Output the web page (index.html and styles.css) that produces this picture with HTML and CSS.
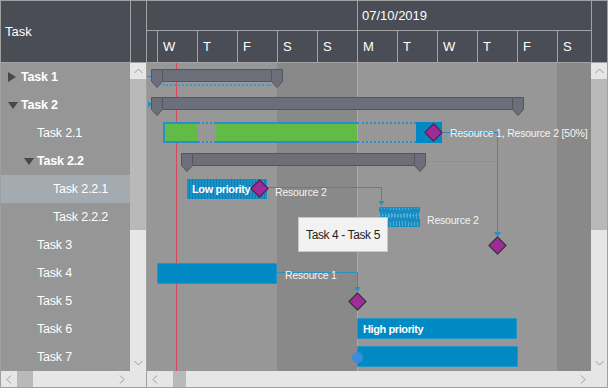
FILE: index.html
```html
<!DOCTYPE html>
<html lang="en">
<head>
  <meta charset="UTF-8">
  <title>Gantt | Week of 07/10/2019</title>
  <link rel="stylesheet" href="styles.css">
</head>
<body>
<div class="gantt">
  <!-- header -->
  <div class="head-task">Task</div>
  <div class="head-gap left"></div>
  <div class="timescale">
    <div class="scale-top">
      <div class="week first"></div>
      <div class="week">07/10/2019</div>
    </div>
    <div class="scale-days">
      <div class="day stub"></div>
      <div class="day">W</div>
      <div class="day">T</div>
      <div class="day">F</div>
      <div class="day">S</div>
      <div class="day">S</div>
      <div class="day">M</div>
      <div class="day">T</div>
      <div class="day">W</div>
      <div class="day">T</div>
      <div class="day">F</div>
      <div class="day last">S</div>
    </div>
  </div>
  <div class="head-gap right"></div>

  <!-- task list -->
  <div class="tasks">
    <div class="task-row top"><span class="caret"><svg width="8" height="10"><path d="M0 0L8 5L0 10Z"/></svg></span>Task 1</div>
    <div class="task-row top"><span class="caret"><svg width="10" height="7"><path d="M0 0H10L5 7Z"/></svg></span>Task 2</div>
    <div class="task-row">Task 2.1</div>
    <div class="task-row bold"><span class="caret"><svg width="10" height="7"><path d="M0 0H10L5 7Z"/></svg></span>Task 2.2</div>
    <div class="task-row deep selected">Task 2.2.1</div>
    <div class="task-row deep">Task 2.2.2</div>
    <div class="task-row">Task 3</div>
    <div class="task-row">Task 4</div>
    <div class="task-row">Task 5</div>
    <div class="task-row">Task 6</div>
    <div class="task-row">Task 7</div>
  </div>
  <div class="vscroll left">
    <div class="sb-btn"><svg width="9" height="6"><polyline points="0.5,5 4.5,1 8.5,5"/></svg></div>
    <div class="v-thumb"></div>
    <div class="track"></div>
    <div class="sb-btn"><svg width="9" height="6"><polyline points="0.5,1 4.5,5 8.5,1"/></svg></div>
  </div>

  <!-- chart -->
  <div class="chart">
    <div class="today-line"></div>
    <div class="week-line"></div>
    <svg class="links" width="444" height="308">
      <path class="link" d="M0 13.5H4"/>
      <path class="head" d="M1 38L5 41.5L1 45Z"/>
      <path class="link" d="M295 69.5H350.5V172"/>
      <path class="head" d="M347 169L350.5 174L354 169Z"/>
      <path class="link soft" d="M278 98.5H350"/>
      <path class="link" d="M120 124.5H234.5V140"/>
      <path class="head" d="M231.5 138L234.5 143L237.5 138Z"/>
      <path class="link" d="M130 209.5H210.5V226"/>
      <path class="head" d="M207.5 224L210.5 229L213.5 224Z"/>
    </svg>

    <div class="chart-row">
      <div class="summary" style="left:4px;width:132px">
        <svg class="cap" width="12" height="19"><path d="M0.5 0.5H11.5V12.5L6 18.5L0.5 12.5Z"/></svg>
        <div class="summary-body"></div>
        <svg class="cap" width="12" height="19"><path d="M0.5 0.5H11.5V12.5L6 18.5L0.5 12.5Z"/></svg>
      </div>
      <div class="dots" style="left:16px;width:108px"></div>
    </div>
    <div class="chart-row">
      <div class="summary" style="left:4px;width:373px">
        <svg class="cap" width="12" height="19"><path d="M0.5 0.5H11.5V12.5L6 18.5L0.5 12.5Z"/></svg>
        <div class="summary-body"></div>
        <svg class="cap" width="12" height="19"><path d="M0.5 0.5H11.5V12.5L6 18.5L0.5 12.5Z"/></svg>
      </div>
    </div>
    <div class="chart-row">
      <div class="split" style="left:16px">
        <div class="seg done first" style="width:35px"></div>
        <div class="seg gap" style="width:18px"></div>
        <div class="seg done" style="width:141px"></div>
        <div class="seg gap" style="width:59px"></div>
        <div class="seg block" style="width:26px"></div>
      </div>
      <div class="milestone" style="left:280px;top:7px"></div>
      <div class="res-label" style="left:303px;top:8px">Resource 1, Resource 2 [50%]</div>
    </div>
    <div class="chart-row">
      <div class="summary" style="left:34px;width:245px">
        <svg class="cap" width="12" height="19"><path d="M0.5 0.5H11.5V12.5L6 18.5L0.5 12.5Z"/></svg>
        <div class="summary-body"></div>
        <svg class="cap" width="12" height="19"><path d="M0.5 0.5H11.5V12.5L6 18.5L0.5 12.5Z"/></svg>
      </div>
    </div>
    <div class="chart-row">
      <div class="bar hatched" style="left:40px;width:80px">Low priority</div>
      <div class="milestone" style="left:106px;top:7px"></div>
      <div class="res-label" style="left:128px;top:11px">Resource 2</div>
    </div>
    <div class="chart-row">
      <div class="bar zigzag" style="left:232px;width:41px"></div>
      <div class="res-label" style="left:280px;top:11px">Resource 2</div>
    </div>
    <div class="chart-row">
      <div class="milestone" style="left:344px;top:8px"></div>
    </div>
    <div class="chart-row">
      <div class="bar" style="left:10px;width:120px"></div>
      <div class="res-label" style="left:138px;top:10px">Resource 1</div>
    </div>
    <div class="chart-row">
      <div class="milestone" style="left:204px;top:8px"></div>
    </div>
    <div class="chart-row">
      <div class="bar high" style="left:210px;width:160px">High priority</div>
    </div>
    <div class="chart-row">
      <div class="bar high" style="left:210px;width:161px"></div>
      <div class="dot" style="left:205px;top:9px"></div>
    </div>

    <div class="tooltip">Task 4 - Task 5</div>
  </div>
  <div class="vscroll">
    <div class="sb-btn"><svg width="9" height="6"><polyline points="0.5,5 4.5,1 8.5,5"/></svg></div>
    <div class="v-thumb"></div>
    <div class="track"></div>
    <div class="sb-btn"><svg width="9" height="6"><polyline points="0.5,1 4.5,5 8.5,1"/></svg></div>
  </div>

  <!-- bottom scrollbars -->
  <div class="hscroll">
    <div class="sb-btn"><svg width="6" height="9"><polyline points="5,0.5 1,4.5 5,8.5"/></svg></div>
    <div class="h-thumb"></div>
    <div class="track"></div>
    <div class="sb-btn"><svg width="6" height="9"><polyline points="1,0.5 5,4.5 1,8.5"/></svg></div>
  </div>
  <div class="corner left"></div>
  <div class="hscroll">
    <div class="sb-btn"><svg width="6" height="9"><polyline points="5,0.5 1,4.5 5,8.5"/></svg></div>
    <div class="h-thumb narrow"></div>
    <div class="track"></div>
    <div class="sb-btn"><svg width="6" height="9"><polyline points="1,0.5 5,4.5 1,8.5"/></svg></div>
  </div>
  <div class="corner"></div>
</div>
</body>
</html>
```

FILE: styles.css
```css
/* Reset */
* {
  margin: 0;
  padding: 0;
  box-sizing: border-box;
}

body {
  font-family: "Liberation Sans", Arial, sans-serif;
  background: #ffffff;
}

.gantt {
  width: 608px;
  height: 388px;
  border: 1px solid #a0a0a0;
  display: grid;
  grid-template-columns: 129px 17px 444px 16px;
  grid-template-rows: 62px 308px 16px;
  background: #e6e6e6;
  color: #ffffff;
}

/* Header */
.head-task {
  background: #4a4d56;
  border-bottom: 1px solid #a3a3a3;
  display: flex;
  align-items: center;
  padding-left: 4px;
  font-size: 13px;
}

.head-gap {
  background: #4a4d56;
  border-bottom: 1px solid #a3a3a3;
  border-left: 1px solid #a3a3a3;
}

.head-gap.left {
  border-right: 1px solid #a3a3a3;
}

.timescale {
  background: #4a4d56;
  border-bottom: 1px solid #a3a3a3;
  display: flex;
  flex-direction: column;
  font-size: 13px;
}

.scale-top {
  height: 30px;
  display: flex;
  border-bottom: 1px solid #a3a3a3;
}

.week {
  flex: 1;
  display: flex;
  align-items: center;
  padding-left: 4px;
  border-left: 1px solid #a3a3a3;
}

.week.first {
  flex: none;
  width: 210px;
  border-left: none;
}

.scale-days {
  flex: 1;
  display: flex;
}

.day {
  width: 40px;
  display: flex;
  align-items: center;
  padding-left: 5px;
  border-left: 1px solid #a3a3a3;
}

.day.stub {
  width: 10px;
  border-left: none;
}

.day.last {
  flex: 1;
}

/* Task list */
.tasks {
  background: #969696;
}

.task-row {
  height: 28px;
  display: flex;
  align-items: center;
  padding-left: 36px;
  font-size: 12.5px;
  letter-spacing: -0.2px;
}

.task-row.top {
  padding-left: 20px;
  font-weight: bold;
}

.task-row.bold {
  font-weight: bold;
}

.task-row.deep {
  padding-left: 52px;
}

.task-row.selected {
  background: #a3aab0;
}

.caret {
  width: 13px;
  margin-left: -13px;
  display: flex;
  align-items: center;
}

.caret svg {
  fill: #46484f;
}

/* Scrollbars */
.vscroll {
  display: flex;
  flex-direction: column;
  background: #e6e6e6;
}

.vscroll.left {
  border-right: 1px solid #a0a0a0;
}

.hscroll {
  display: flex;
  background: #e6e6e6;
}

.sb-btn {
  flex: none;
  width: 16px;
  height: 16px;
  display: flex;
  align-items: center;
  justify-content: center;
}

.vscroll .sb-btn {
  width: auto;
}

.sb-btn svg {
  fill: none;
  stroke: #9a9a9a;
  stroke-width: 1;
}

.track {
  flex: 1;
}

.v-thumb {
  height: 151px;
  background: #b9b9b9;
}

.h-thumb {
  width: 16px;
  background: #b9b9b9;
}

.h-thumb.narrow {
  width: 13px;
  margin-left: 10px;
}

.corner.left {
  border-right: 1px solid #a0a0a0;
}

/* Chart */
.chart {
  position: relative;
  overflow: hidden;
  background: linear-gradient(to right,
    #979797 130px, #898989 130px 210px,
    #979797 210px 410px, #898989 410px);
}

.today-line {
  position: absolute;
  left: 29px;
  top: 0;
  bottom: 0;
  width: 1px;
  background: #d9475d;
}

.week-line {
  position: absolute;
  left: 210px;
  top: 0;
  bottom: 0;
  width: 1px;
  background: #aaa6c2;
}

.links {
  position: absolute;
  left: 0;
  top: 0;
}

.link {
  fill: none;
  stroke: #2a90c4;
  stroke-width: 1;
}

.link.soft {
  stroke: #5d9fbf;
}

.head {
  fill: #2a90c4;
}

.chart-row {
  position: relative;
  height: 28px;
}

.summary {
  position: absolute;
  top: 6px;
  height: 19px;
  display: flex;
}

.summary .cap {
  flex: none;
}

.summary .cap path {
  fill: #6c6e79;
  stroke: #54565e;
}

.summary-body {
  flex: 1;
  height: 13px;
  background: #6c6e79;
  border-top: 1px solid #54565e;
  border-bottom: 1px solid #54565e;
}

.dots {
  position: absolute;
  top: 21px;
  border-top: 2px dotted #3b9ac6;
}

.split {
  position: absolute;
  top: 3px;
  height: 21px;
  display: flex;
}

.seg.done {
  background: #62bb46;
  border-top: 2px solid #2b8ec4;
  border-bottom: 2px solid #2b8ec4;
}

.seg.first {
  border-left: 2px solid #2b8ec4;
}

.seg.gap {
  border-top: 2px dotted #2b8ec4;
  border-bottom: 2px dotted #2b8ec4;
}

.seg.block {
  background: #0089c2;
}

.bar {
  position: absolute;
  top: 4px;
  height: 21px;
  background: #0089c2;
  border: 1px solid #2594c6;
  border-radius: 1px;
  display: flex;
  align-items: center;
  padding-left: 5px;
  font-size: 11px;
  font-weight: bold;
  letter-spacing: -0.4px;
}

.bar.high {
  top: 3px;
}

.bar.hatched {
  height: 20px;
  border: none;
  background: repeating-linear-gradient(90deg, #1a92c8 0 2px, #0e7fb4 2px 3px);
}

.bar.zigzag {
  height: 20px;
  border: none;
  border-top: 1px solid #1a8fc6;
  border-bottom: 1px solid #1a8fc6;
  background:
    repeating-linear-gradient(82deg, #168cc4 0 1.5px, transparent 1.5px 3px),
    repeating-linear-gradient(-82deg, #168cc4 0 1.5px, transparent 1.5px 3px),
    #5aa9cf;
}

.milestone {
  position: absolute;
  width: 13px;
  height: 13px;
  background: #9c2c99;
  border: 1px solid #3a2d3a;
  transform: rotate(45deg);
}

.dot {
  position: absolute;
  width: 11px;
  height: 11px;
  border-radius: 50%;
  background: #3b8de0;
}

.res-label {
  position: absolute;
  font-size: 10.5px;
  line-height: 12px;
  letter-spacing: -0.2px;
  white-space: nowrap;
  color: #f4f4f4;
}

.tooltip {
  position: absolute;
  left: 151px;
  top: 154px;
  width: 90px;
  height: 35px;
  background: #f2f2f2;
  border: 1px solid #c8c8c8;
  color: #222222;
  font-size: 12px;
  letter-spacing: -0.4px;
  display: flex;
  align-items: center;
  justify-content: center;
}
```
